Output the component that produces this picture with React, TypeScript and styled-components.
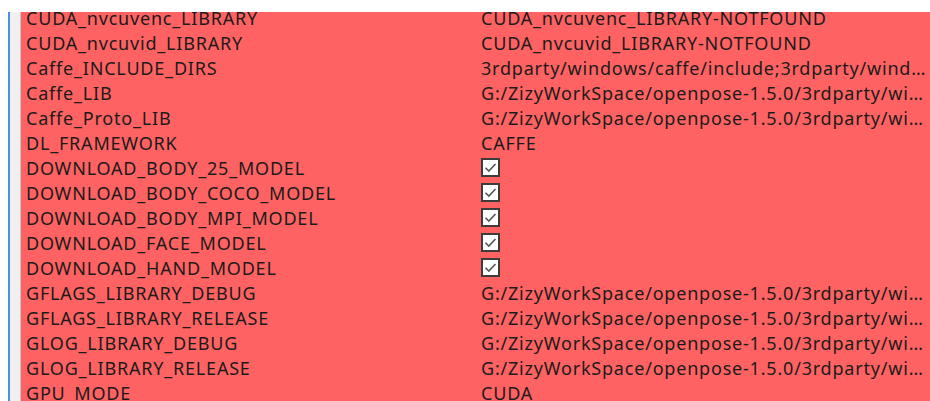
import React from 'react';
import styled, { createGlobalStyle } from 'styled-components';

const GlobalStyle = createGlobalStyle`
  html, body {
    margin: 0;
    padding: 0;
    background: #ffffff;
  }
  body {
    width: 930px;
    height: 401px;
    overflow: hidden;
    font-family: "Noto Sans", "Noto Sans CJK SC", sans-serif;
  }
`;

const Page = styled.div`
  display: flex;
  flex-direction: column;
  width: 930px;
  height: 401px;
  overflow: hidden;
`;

const TopGap = styled.div`
  height: 12px;
  flex-shrink: 0;
  background: #ffffff;
`;

const Body = styled.div`
  display: flex;
  flex: 1;
  min-height: 0;
`;

const LeftMargin = styled.div`
  width: 8px;
  flex-shrink: 0;
  background: #ffffff;
  border-right: 2px solid #4a90e2;
`;

const Gutter = styled.div`
  width: 10px;
  flex-shrink: 0;
  background: #f0f0f0;
  border-right: 1px solid #c8c8c8;
`;

const Table = styled.div`
  flex: 1;
  min-width: 0;
  overflow: hidden;
  background: #ff6262;
`;

const Rows = styled.div`
  margin-top: -7px;
  display: flex;
  flex-direction: column;
`;

const Row = styled.div`
  display: grid;
  grid-template-columns: 460px 1fr;
  height: 25px;
  align-items: center;
  font-size: 18px;
  letter-spacing: 0.8px;
  color: #1b1b1b;
`;

const Name = styled.div`
  padding-left: 5px;
  white-space: nowrap;
  overflow: hidden;
`;

const Value = styled.div`
  white-space: nowrap;
  overflow: hidden;
  text-overflow: ellipsis;
  padding-right: 1px;
`;

const CheckBox = styled.div`
  width: 15px;
  height: 15px;
  border: 2px solid #3c3c3c;
  background: #ffffff;
  display: flex;
  align-items: center;
  justify-content: center;
`;

type Entry = { name: string; value?: string; checked?: boolean };

const entries: Entry[] = [
  { name: 'CUDA_nvcuvenc_LIBRARY', value: 'CUDA_nvcuvenc_LIBRARY-NOTFOUND' },
  { name: 'CUDA_nvcuvid_LIBRARY', value: 'CUDA_nvcuvid_LIBRARY-NOTFOUND' },
  { name: 'Caffe_INCLUDE_DIRS', value: '3rdparty/windows/caffe/include;3rdparty/windows/caffe/include2' },
  { name: 'Caffe_LIB', value: 'G:/ZizyWorkSpace/openpose-1.5.0/3rdparty/windows/caffe/lib/caffe.lib' },
  { name: 'Caffe_Proto_LIB', value: 'G:/ZizyWorkSpace/openpose-1.5.0/3rdparty/windows/caffe/lib/caffeproto.lib' },
  { name: 'DL_FRAMEWORK', value: 'CAFFE' },
  { name: 'DOWNLOAD_BODY_25_MODEL', checked: true },
  { name: 'DOWNLOAD_BODY_COCO_MODEL', checked: true },
  { name: 'DOWNLOAD_BODY_MPI_MODEL', checked: true },
  { name: 'DOWNLOAD_FACE_MODEL', checked: true },
  { name: 'DOWNLOAD_HAND_MODEL', checked: true },
  { name: 'GFLAGS_LIBRARY_DEBUG', value: 'G:/ZizyWorkSpace/openpose-1.5.0/3rdparty/windows/caffe3rdparty/lib/gflagsd.lib' },
  { name: 'GFLAGS_LIBRARY_RELEASE', value: 'G:/ZizyWorkSpace/openpose-1.5.0/3rdparty/windows/caffe3rdparty/lib/gflags.lib' },
  { name: 'GLOG_LIBRARY_DEBUG', value: 'G:/ZizyWorkSpace/openpose-1.5.0/3rdparty/windows/caffe3rdparty/lib/glogd.lib' },
  { name: 'GLOG_LIBRARY_RELEASE', value: 'G:/ZizyWorkSpace/openpose-1.5.0/3rdparty/windows/caffe3rdparty/lib/glog.lib' },
  { name: 'GPU_MODE', value: 'CUDA' },
];

const Check: React.FC = () => (
  <CheckBox>
    <svg width="13" height="13" viewBox="0 0 13 13">
      <path d="M1.5 6.8 L4.8 10 L11.5 3" fill="none" stroke="#555555" strokeWidth="1.6" />
    </svg>
  </CheckBox>
);

const App: React.FC = () => {
  return (
    <>
      <GlobalStyle />
      <Page>
        <TopGap />
        <Body>
          <LeftMargin />
          <Gutter />
          <Table>
            <Rows>
              {entries.map((e) => (
                <Row key={e.name}>
                  <Name>{e.name}</Name>
                  {e.checked ? <Check /> : <Value>{e.value}</Value>}
                </Row>
              ))}
            </Rows>
          </Table>
        </Body>
      </Page>
    </>
  );
};

export default App;
